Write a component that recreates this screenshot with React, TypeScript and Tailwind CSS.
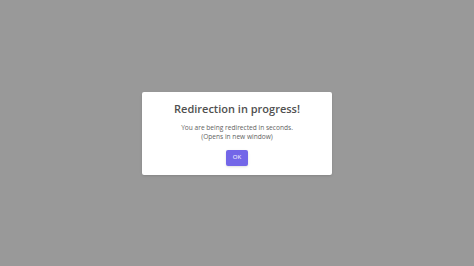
export default function App() {
  return (
    <div
      className="flex h-[266px] w-full items-center justify-center bg-[#999999]"
      style={{ fontFamily: '"Open Sans", "Noto Sans", sans-serif' }}
    >
      <div className="flex h-[83px] w-[190px] flex-col items-center rounded-[2px] bg-white pt-[8px] shadow-sm">
        <h2 className="text-[11px] leading-[18px] font-semibold text-[#505050]">
          Redirection in progress!
        </h2>
        <p className="mt-[5px] text-center text-[6.6px] leading-[9px] text-[#5f5f5f]">
          You are being redirected in seconds.
          <br />
          (Opens in new window)
        </p>
        <button className="mt-[9px] h-[16px] w-[22px] rounded-[2px] bg-[#7366e8] text-[6px] text-white shadow-sm">
          OK
        </button>
      </div>
    </div>
  );
}
